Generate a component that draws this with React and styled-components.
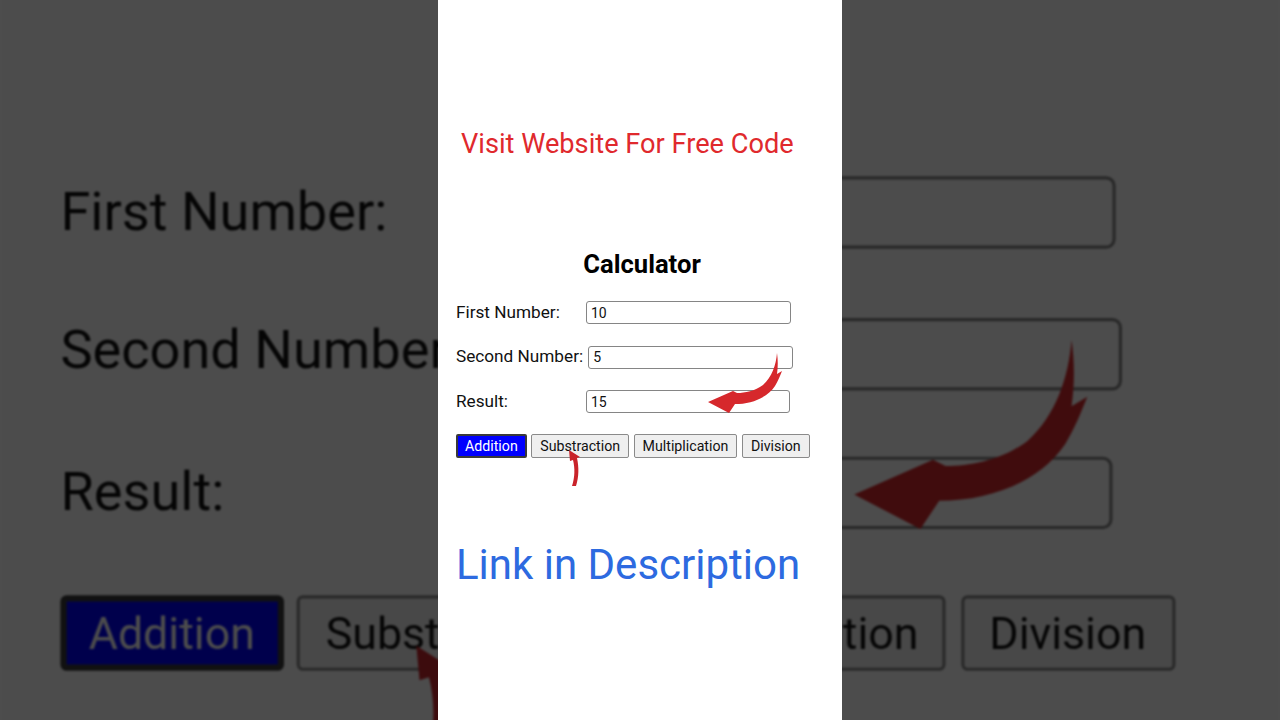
import React from "react";
import styled, { createGlobalStyle } from "styled-components";

const GlobalStyle = createGlobalStyle`
  html, body {
    margin: 0;
    padding: 0;
    background: #4d4d4d;
  }
  body {
    font-family: Roboto, "Liberation Sans", Arial, sans-serif;
  }
`;

const Stage = styled.div`
  position: relative;
  width: 1280px;
  height: 720px;
  overflow: hidden;
  display: flex;
  justify-content: center;
`;

// the blurred, dimmed copy of the phone that fills the video frame behind it
const Backdrop = styled.div`
  position: absolute;
  inset: 0;
  display: flex;
  justify-content: center;
  filter: brightness(0.3) blur(1.2px);
  pointer-events: none;
`;

const Zoomed = styled.div`
  transform-origin: 202px 359px;
  transform: scale(3.15);
`;

const Panel = styled.div`
  position: relative;
  z-index: 1;
`;

const Screen = styled.div`
  position: relative;
  width: 404px;
  height: 720px;
  background: #ffffff;
  display: flex;
  flex-direction: column;
  box-sizing: border-box;
  padding: 0 18px;
`;

const Promo = styled.div`
  margin-top: 127px;
  padding-left: 5px;
  font-size: 27.2px;
  line-height: 34px;
  color: #e0292d;
  white-space: nowrap;
`;

const Calc = styled.div`
  margin-top: 88px;
  display: flex;
  flex-direction: column;
`;

const Title = styled.h2`
  margin: 0 0 22px;
  font-size: 25.6px;
  line-height: 30px;
  font-weight: 700;
  text-align: center;
  color: #000;
  padding-left: 4px;
`;

const Row = styled.label`
  display: flex;
  align-items: center;
  height: 23px;
  margin-bottom: 21.5px;
`;

const Label = styled.span`
  min-width: 130px;
  padding: 0 5px 2px 0;
  box-sizing: border-box;
  font-size: 17.2px;
  color: #111;
  white-space: nowrap;
`;

const Field = styled.input`
  width: ${(p) => p.$w}px;
  height: 23px;
  box-sizing: border-box;
  border: 1px solid #858585;
  border-radius: 3px;
  padding: 0 4px;
  font-family: Roboto, "Liberation Sans", Arial, sans-serif;
  font-size: 14px;
  color: #111;
  background: #fff;
  outline: none;
`;

const Buttons = styled.div`
  display: flex;
  gap: 4.5px;
  margin-top: -0.5px;
`;

const OpButton = styled.button`
  height: 24px;
  padding: 0 ${(p) => (p.$active ? 7 : 8)}px;
  font-family: Roboto, "Liberation Sans", Arial, sans-serif;
  font-size: 14.2px;
  line-height: 1;
  border-radius: 2px;
  cursor: pointer;
  color: ${(p) => (p.$active ? "#fff" : "#111")};
  background: ${(p) => (p.$active ? "#0000ff" : "#efefef")};
  border: ${(p) => (p.$active ? "2px solid #3a3a3a" : "1px solid #8a8a8a")};
`;

const LinkText = styled.div`
  margin-top: 82px;
  font-size: 42px;
  line-height: 50px;
  color: #2d6ae0;
  white-space: nowrap;
`;

const ArrowLayer = styled.svg`
  position: absolute;
  left: ${(p) => p.$x}px;
  top: ${(p) => p.$y}px;
  overflow: visible;
`;

function CurvedArrow() {
  return (
    <ArrowLayer $x={262} $y={345} width="90" height="72" viewBox="0 0 90 72">
      <path
        d="M77,8 C76,20 72,32 63,40 C55,46 45,48 37,48 L33,46 L8,57 L29,68 L35,59
           C51,59 67,53 75,41 C78,36 80,31 82,26 L77,29 C78,22 78,15 77,8 Z"
        fill="#d6282c"
      />
    </ArrowLayer>
  );
}

function SmallArrow() {
  return (
    <ArrowLayer $x={122} $y={445} width="30" height="45" viewBox="0 0 30 45">
      <path
        d="M9,5 L20,12 L17,13 C19,22 19,32 16,41 L12,41 C15,32 15,23 13,15 L10,16 Z"
        fill="#c9232a"
      />
    </ArrowLayer>
  );
}

const ops = ["Addition", "Substraction", "Multiplication", "Division"];

function PhoneScreen() {
  return (
    <Screen>
      <Promo>Visit Website For Free Code</Promo>
      <Calc>
        <Title>Calculator</Title>
        <Row>
          <Label>First Number:</Label>
          <Field $w={205} readOnly value="10" />
        </Row>
        <Row>
          <Label>Second Number:</Label>
          <Field $w={205} readOnly value="5" />
        </Row>
        <Row>
          <Label>Result:</Label>
          <Field $w={204} readOnly value="15" />
        </Row>
        <Buttons>
          {ops.map((op, i) => (
            <OpButton key={op} $active={i === 0}>
              {op}
            </OpButton>
          ))}
        </Buttons>
      </Calc>
      <LinkText>Link in Description</LinkText>
      <CurvedArrow />
      <SmallArrow />
    </Screen>
  );
}

export default function App() {
  return (
    <Stage>
      <GlobalStyle />
      <Backdrop aria-hidden="true">
        <Zoomed>
          <PhoneScreen />
        </Zoomed>
      </Backdrop>
      <Panel>
        <PhoneScreen />
      </Panel>
    </Stage>
  );
}
